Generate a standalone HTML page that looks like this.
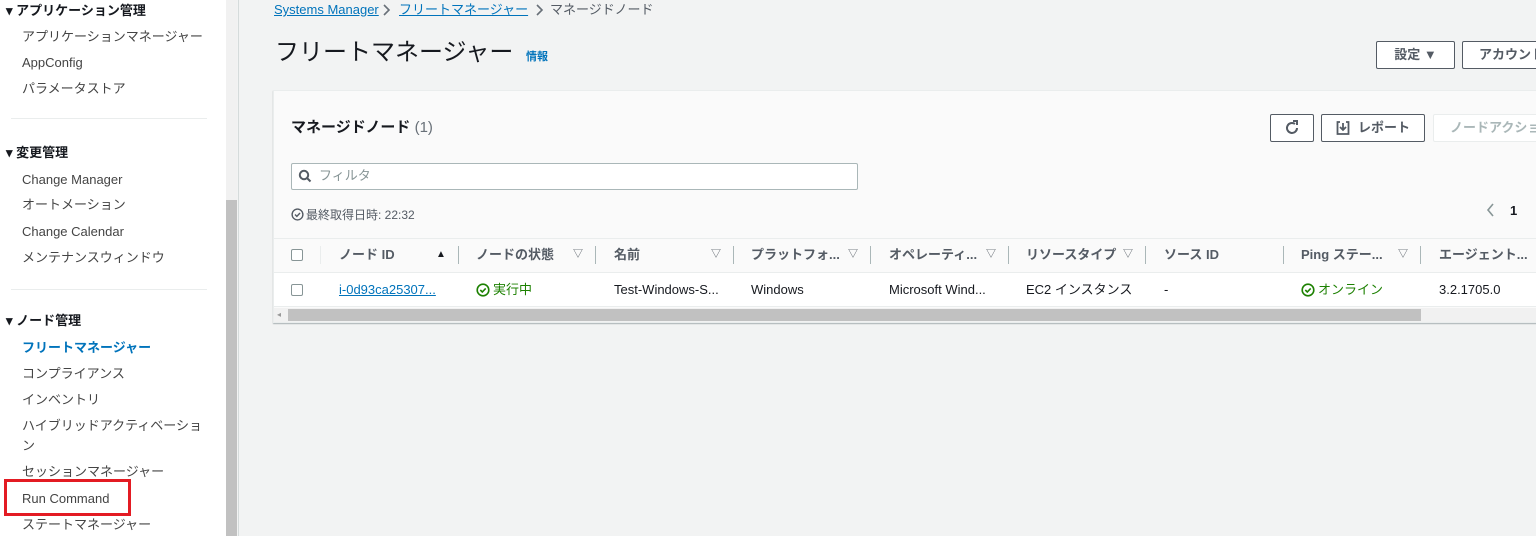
<!DOCTYPE html>
<html><head><meta charset="utf-8"><style>
*{margin:0;padding:0;box-sizing:border-box}
body{width:1536px;height:536px;overflow:hidden;background:#f2f3f3;font-family:"Liberation Sans","Noto Sans CJK JP",sans-serif;font-size:13px;color:#16191f;position:relative}
.a{position:absolute;white-space:nowrap;line-height:16px}
#side{position:absolute;left:0;top:0;width:226px;height:536px;background:#fff}
.h{font-weight:bold;font-size:13px}
.it{color:#444;font-size:13px}
.hr{position:absolute;left:11px;width:196px;height:1px;background:#eaeded}
.btn{position:absolute;border:1px solid #545b64;background:#fff;height:28px;font-weight:bold;color:#545b64;display:flex;align-items:center;justify-content:center;font-size:13px;border-radius:2px;white-space:nowrap;overflow:hidden;line-height:16px}
.th{font-weight:bold;color:#545b64;font-size:13px}
.sep{position:absolute;top:246px;width:1px;height:18px;background:#aab7b8}
.cb{position:absolute;width:12px;height:12px;border:1px solid #879596;border-radius:2px;background:#fff}
.tri{position:absolute;font-size:10px;color:#545b64;line-height:16px}
</style></head><body>
<div id="side">
<div class="a h" style="left:6px;top:3px">▾ アプリケーション管理</div>
<div class="a it" style="left:22px;top:29px">アプリケーションマネージャー</div>
<div class="a it" style="left:22px;top:55px">AppConfig</div>
<div class="a it" style="left:22px;top:81px">パラメータストア</div>
<div class="hr" style="top:118px"></div>
<div class="a h" style="left:6px;top:145px">▾ 変更管理</div>
<div class="a it" style="left:22px;top:172px">Change Manager</div>
<div class="a it" style="left:22px;top:197px">オートメーション</div>
<div class="a it" style="left:22px;top:224px">Change Calendar</div>
<div class="a it" style="left:22px;top:250px">メンテナンスウィンドウ</div>
<div class="hr" style="top:289px"></div>
<div class="a h" style="left:6px;top:313px">▾ ノード管理</div>
<div class="a" style="left:22px;top:340px;color:#0073bb;font-weight:bold">フリートマネージャー</div>
<div class="a it" style="left:22px;top:366px">コンプライアンス</div>
<div class="a it" style="left:22px;top:392px">インベントリ</div>
<div class="a it" style="left:22px;top:418px">ハイブリッドアクティベーショ</div>
<div class="a it" style="left:22px;top:438px">ン</div>
<div class="a it" style="left:22px;top:464px">セッションマネージャー</div>
<div class="a it" style="left:22px;top:491px">Run Command</div>
<div class="a it" style="left:22px;top:517px">ステートマネージャー</div>
<div class="a" style="left:4px;top:479px;width:127px;height:37px;border:3px solid #e31b23"></div>
</div>
<div class="a" style="left:226px;top:200px;width:11px;height:336px;background:#c1c1c1"></div>
<div class="a" style="left:226px;top:0;width:11px;height:200px;background:#f1f1f1"></div>
<div class="a" style="left:238px;top:0;width:1px;height:536px;background:#d5dbdb"></div>

<div class="a" style="left:274px;top:2px;color:#0073bb;text-decoration:underline">Systems Manager</div>
<svg class="a" style="left:381px;top:4px" width="10" height="12" viewBox="0 0 10 12"><path d="M3 1l5 5-5 5" fill="none" stroke="#687078" stroke-width="1.6"/></svg>
<div class="a" style="left:399px;top:2px;color:#0073bb;text-decoration:underline">フリートマネージャー</div>
<svg class="a" style="left:534px;top:4px" width="10" height="12" viewBox="0 0 10 12"><path d="M3 1l5 5-5 5" fill="none" stroke="#687078" stroke-width="1.6"/></svg>
<div class="a" style="left:550px;top:2px;color:#545b64">マネージドノード</div>
<div class="a" style="left:275px;top:38px;font-size:24px;line-height:30px;color:#16191f">フリートマネージャー</div>
<div class="a" style="left:526px;top:49px;font-size:11px;color:#0073bb;font-weight:bold">情報</div>
<div class="btn" style="left:1376px;top:41px;width:79px">設定 ▼</div>
<div class="btn" style="left:1462px;top:41px;width:90px;justify-content:flex-start;padding-left:16px">アカウント</div>

<div class="a" style="left:273px;top:90px;width:1270px;height:233px;background:#fafafa;border:1px solid #eaeded;box-shadow:0 1px 1px rgba(0,28,36,.3)"></div>
<div class="a" style="left:291px;top:119px;font-size:15px;line-height:18px;font-weight:bold">マネージドノード <span style="font-weight:normal;color:#687078">(1)</span></div>
<div class="btn" style="left:1270px;top:114px;width:44px"><svg width="16" height="16" viewBox="0 0 16 16"><path d="M13 8a5 5 0 1 1-2-4" fill="none" stroke="#545b64" stroke-width="2"/><path d="M9 1h4v4" fill="none" stroke="#545b64" stroke-width="2"/></svg></div>
<div class="btn" style="left:1321px;top:114px;width:104px"><svg width="14" height="14" viewBox="0 0 14 14" style="margin-right:8px"><path d="M4 1H1.5v12h11V1H10M7 2v7M4 6l3 3 3-3" fill="none" stroke="#545b64" stroke-width="1.8"/></svg>レポート</div>
<div class="btn" style="left:1433px;top:114px;width:120px;border-color:#eaeded;color:#aab7b8;justify-content:flex-start;padding-left:16px">ノードアクション</div>
<div class="a" style="left:291px;top:163px;width:567px;height:27px;border:1px solid #aab7b8;background:#fff;border-radius:2px"></div>
<svg class="a" style="left:298px;top:169px" width="14" height="14" viewBox="0 0 14 14"><circle cx="6" cy="6" r="4.2" fill="none" stroke="#545b64" stroke-width="2"/><path d="M9 9l3.5 3.5" stroke="#545b64" stroke-width="2"/></svg>
<div class="a" style="left:319px;top:168px;color:#879596">フィルタ</div>
<svg class="a" style="left:291px;top:208px" width="13" height="13" viewBox="0 0 14 14"><circle cx="7" cy="7" r="5.8" fill="none" stroke="#545b64" stroke-width="1.5"/><path d="M4.3 7l2 2 3.4-3.6" fill="none" stroke="#545b64" stroke-width="1.5"/></svg>
<div class="a" style="left:306px;top:207px;font-size:12px;color:#545b64">最終取得日時: 22:32</div>
<svg class="a" style="left:1486px;top:203px" width="10" height="14" viewBox="0 0 10 14"><path d="M7 1L2 7l5 6" fill="none" stroke="#879596" stroke-width="1.6"/></svg>
<div class="a" style="left:1510px;top:203px;font-weight:bold;font-size:13px">1</div>

<div class="a" style="left:274px;top:238px;width:1270px;height:1px;background:#eaeded"></div>
<div class="a" style="left:274px;top:272px;width:1270px;height:35px;background:#fff;border-top:1px solid #eaeded;border-bottom:1px solid #eaeded"></div>
<div class="cb" style="left:291px;top:249px"></div>
<div class="cb" style="left:291px;top:284px"></div>
<div class="sep" style="left:320px;background:#eaeded"></div>
<div class="a th" style="left:339px;top:247px">ノード ID</div><div class="tri" style="left:436px;top:247px;color:#16191f">▲</div>
<div class="sep" style="left:458px"></div>
<div class="a th" style="left:476px;top:247px">ノードの状態</div><div class="tri" style="left:573px;top:247px">▽</div>
<div class="sep" style="left:595px"></div>
<div class="a th" style="left:614px;top:247px">名前</div><div class="tri" style="left:711px;top:247px">▽</div>
<div class="sep" style="left:733px"></div>
<div class="a th" style="left:751px;top:247px">プラットフォ...</div><div class="tri" style="left:848px;top:247px">▽</div>
<div class="sep" style="left:870px"></div>
<div class="a th" style="left:889px;top:247px">オペレーティ...</div><div class="tri" style="left:986px;top:247px">▽</div>
<div class="sep" style="left:1008px"></div>
<div class="a th" style="left:1026px;top:247px">リソースタイプ</div><div class="tri" style="left:1123px;top:247px">▽</div>
<div class="sep" style="left:1145px"></div>
<div class="a th" style="left:1164px;top:247px">ソース ID</div>
<div class="sep" style="left:1283px"></div>
<div class="a th" style="left:1301px;top:247px">Ping ステー...</div><div class="tri" style="left:1398px;top:247px">▽</div>
<div class="sep" style="left:1420px"></div>
<div class="a th" style="left:1439px;top:247px">エージェント...</div>

<div class="a" style="left:339px;top:282px;color:#0073bb;text-decoration:underline">i-0d93ca25307...</div>
<svg class="a" style="left:476px;top:283px" width="14" height="14" viewBox="0 0 14 14"><circle cx="7" cy="7" r="5.8" fill="none" stroke="#1d8102" stroke-width="1.6"/><path d="M4.3 7l2 2 3.4-3.6" fill="none" stroke="#1d8102" stroke-width="1.6"/></svg>
<div class="a" style="left:493px;top:282px;color:#1d8102">実行中</div>
<div class="a" style="left:614px;top:282px">Test-Windows-S...</div>
<div class="a" style="left:751px;top:282px">Windows</div>
<div class="a" style="left:889px;top:282px">Microsoft Wind...</div>
<div class="a" style="left:1026px;top:282px">EC2 インスタンス</div>
<div class="a" style="left:1164px;top:282px">-</div>
<svg class="a" style="left:1301px;top:283px" width="14" height="14" viewBox="0 0 14 14"><circle cx="7" cy="7" r="5.8" fill="none" stroke="#1d8102" stroke-width="1.6"/><path d="M4.3 7l2 2 3.4-3.6" fill="none" stroke="#1d8102" stroke-width="1.6"/></svg>
<div class="a" style="left:1318px;top:282px;color:#1d8102">オンライン</div>
<div class="a" style="left:1439px;top:282px">3.2.1705.0</div>

<div class="a" style="left:274px;top:308px;width:1270px;height:14px;background:#f1f1f1"></div>
<div class="a" style="left:288px;top:309px;width:1133px;height:12px;background:#c1c1c1"></div>
<div class="a" style="left:277px;top:307px;font-size:8px;color:#999">◂</div>
</body></html>
